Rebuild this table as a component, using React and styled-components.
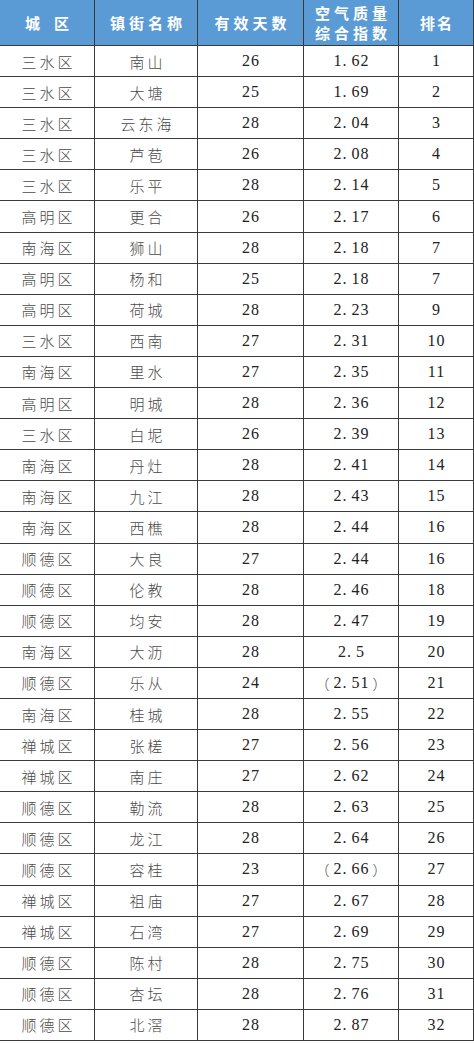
import React from "react";
import styled, { createGlobalStyle } from "styled-components";

const GlobalStyle = createGlobalStyle`
    html, body {
        margin: 0;
        padding: 0;
        background: #fff;
    }
`;

const Table = styled.div`
    display: grid;
    grid-template-columns: 95px 103px 106px 95px 75px;
    grid-template-rows: 46px;
    grid-auto-rows: 31.1px;
    width: 474px;
    font-family: "Liberation Serif", "Noto Sans CJK SC", serif;
`;

const HeadCell = styled.div`
    background-color: #5b9bd5;
    color: #fff;
    font-family: "Noto Sans CJK SC", sans-serif;
    font-weight: 700;
    font-size: 15px;
    line-height: 20px;
    letter-spacing: ${(props) => props.spacing || 4}px;
    display: flex;
    align-items: center;
    justify-content: center;
    text-align: center;
    border-right: 1px solid #3a3a3a;
    border-bottom: 1px solid #3a3a3a;
    box-sizing: border-box;
    padding-left: ${(props) => props.spacing || 4}px;
`;

const Cell = styled.div`
    display: flex;
    align-items: center;
    justify-content: center;
    border-right: 1px solid #3a3a3a;
    border-bottom: 1px solid #3a3a3a;
    box-sizing: border-box;
    font-size: ${(props) => (props.cn ? 15 : 16)}px;
    font-family: ${(props) =>
        props.cn
            ? '"Noto Sans CJK SC", sans-serif'
            : '"Liberation Serif", "Noto Sans CJK SC", serif'};
    font-weight: ${(props) => (props.cn ? 300 : 400)};
    color: ${(props) => (props.cn ? "#4a4a4a" : "#222")};
    letter-spacing: ${(props) => (props.cn ? 3 : 1)}px;
    padding-left: ${(props) => (props.cn ? 3 : 1)}px;
    white-space: nowrap;
`;

const Dot = styled.span`
    display: inline-block;
    width: 9px;
    text-align: left;
`;

const Paren = styled.span`
    font-family: "Noto Sans CJK SC", sans-serif;
    font-weight: 300;
    font-size: 14px;
    color: #444;
    margin: 0 3px;
`;

const rows = [
    ["三水区", "南山", 26, "1.62", 1],
    ["三水区", "大塘", 25, "1.69", 2],
    ["三水区", "云东海", 28, "2.04", 3],
    ["三水区", "芦苞", 26, "2.08", 4],
    ["三水区", "乐平", 28, "2.14", 5],
    ["高明区", "更合", 26, "2.17", 6],
    ["南海区", "狮山", 28, "2.18", 7],
    ["高明区", "杨和", 25, "2.18", 7],
    ["高明区", "荷城", 28, "2.23", 9],
    ["三水区", "西南", 27, "2.31", 10],
    ["南海区", "里水", 27, "2.35", 11],
    ["高明区", "明城", 28, "2.36", 12],
    ["三水区", "白坭", 26, "2.39", 13],
    ["南海区", "丹灶", 28, "2.41", 14],
    ["南海区", "九江", 28, "2.43", 15],
    ["南海区", "西樵", 28, "2.44", 16],
    ["顺德区", "大良", 27, "2.44", 16],
    ["顺德区", "伦教", 28, "2.46", 18],
    ["顺德区", "均安", 28, "2.47", 19],
    ["南海区", "大沥", 28, "2.5", 20],
    ["顺德区", "乐从", 24, "(2.51)", 21],
    ["南海区", "桂城", 28, "2.55", 22],
    ["禅城区", "张槎", 27, "2.56", 23],
    ["禅城区", "南庄", 27, "2.62", 24],
    ["顺德区", "勒流", 28, "2.63", 25],
    ["顺德区", "龙江", 28, "2.64", 26],
    ["顺德区", "容桂", 23, "(2.66)", 27],
    ["禅城区", "祖庙", 27, "2.67", 28],
    ["禅城区", "石湾", 27, "2.69", 29],
    ["顺德区", "陈村", 28, "2.75", 30],
    ["顺德区", "杏坛", 28, "2.76", 31],
    ["顺德区", "北滘", 28, "2.87", 32],
];

const Index = ({ value }) => {
    const paren = value.startsWith("(");
    const num = value.replace(/[()]/g, "");
    const [whole, frac] = num.split(".");
    return (
        <>
            {paren && <Paren>（</Paren>}
            {whole}
            <Dot>.</Dot>
            {frac}
            {paren && <Paren>）</Paren>}
        </>
    );
};

const App = () => {
    return (
        <>
            <GlobalStyle />
            <Table>
                <HeadCell spacing={14}>城区</HeadCell>
                <HeadCell>镇街名称</HeadCell>
                <HeadCell>有效天数</HeadCell>
                <HeadCell>
                    空气质量
                    <br />
                    综合指数
                </HeadCell>
                <HeadCell spacing={2}>排名</HeadCell>
                {rows.map((r, i) => (
                    <React.Fragment key={i}>
                        <Cell cn>{r[0]}</Cell>
                        <Cell cn>{r[1]}</Cell>
                        <Cell>{r[2]}</Cell>
                        <Cell>
                            <Index value={r[3]} />
                        </Cell>
                        <Cell>{r[4]}</Cell>
                    </React.Fragment>
                ))}
            </Table>
        </>
    );
};

export default App;
